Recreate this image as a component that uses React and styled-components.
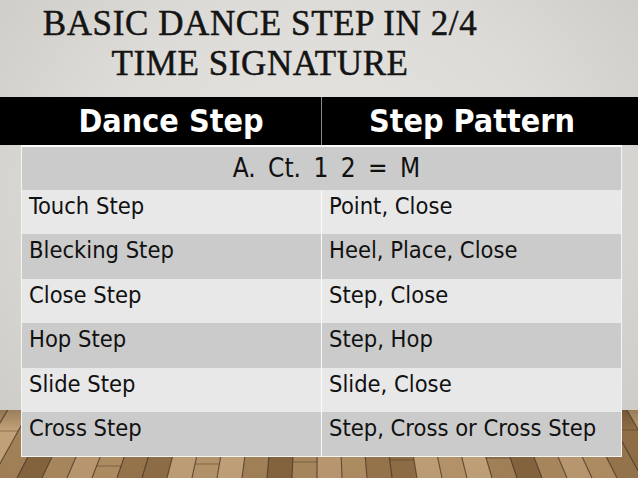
import React from 'react';
import styled, { createGlobalStyle } from 'styled-components';

const GlobalStyle = createGlobalStyle`
  html, body { margin: 0; padding: 0; }
  body { width: 638px; height: 478px; overflow: hidden; background: #d9d7d3; }
`;

const Page = styled.div`
  position: relative;
  width: 638px;
  height: 478px;
  overflow: hidden;
  background: radial-gradient(ellipse 75% 85% at 50% 40%, #e7e5e2 0%, #dddbd7 50%, #c9c6c2 100%);
`;

const FloorArt = styled.svg`
  position: absolute;
  left: 0;
  bottom: 0;
  z-index: 0;
  display: block;
`;

const Content = styled.div`
  position: relative;
  z-index: 1;
  padding-top: 4px;
`;

const Title = styled.h1`
  margin: 0 0 13px 0;
  width: 520px;
  text-align: center;
  font-family: "Liberation Serif", serif;
  font-weight: 400;
  font-size: 35px;
  line-height: 40px;
  letter-spacing: 0.6px;
  color: #141414;
  -webkit-text-stroke: 0.5px #141414;
`;

const HeaderBar = styled.div`
  display: grid;
  grid-template-columns: 300px 301px;
  padding-left: 21px;
  height: 48px;
  background: #000;
`;

const HeadCell = styled.div`
  display: flex;
  align-items: center;
  justify-content: center;
  color: #fff;
  font-family: "DejaVu Sans Condensed", "DejaVu Sans", sans-serif;
  font-stretch: condensed;
  font-weight: 700;
  font-size: 32px;
  border-left: ${p => (p.$divider ? '1px solid #8a8a8a' : 'none')};
`;

const Body = styled.div`
  box-sizing: border-box;
  margin-left: 21px;
  width: 601px;
  border: 1px solid #f3f3f3;
  border-top: 2px solid #fafafa;
`;

const SectionRow = styled.div`
  box-sizing: border-box;
  height: 43px;
  padding-top: 4px;
  background: #cbcbcb;
  display: flex;
  justify-content: center;
  font-family: "DejaVu Sans Condensed", "DejaVu Sans", sans-serif;
  font-stretch: condensed;
  font-size: 26px;
  line-height: 34px;
  word-spacing: 5px;
  color: #111;
  padding-left: 10px;
`;

const Row = styled.div`
  display: grid;
  grid-template-columns: 299px 1fr;
  height: ${p => p.$h}px;
  background: ${p => (p.$dark ? '#cbcbcb' : '#e8e8e8')};
`;

const Cell = styled.div`
  padding-left: ${p => (p.$divider ? 7 : 7)}px;
  border-left: ${p => (p.$divider ? '1px solid #fbfbfb' : 'none')};
  font-family: "DejaVu Sans Condensed", "DejaVu Sans", sans-serif;
  font-stretch: condensed;
  font-size: 23.5px;
  line-height: 32px;
  color: #111;
  white-space: nowrap;
`;

const rows = [
  ['Touch Step', 'Point, Close'],
  ['Blecking Step', 'Heel, Place, Close'],
  ['Close Step', 'Step, Close'],
  ['Hop Step', 'Step, Hop'],
  ['Slide Step', 'Slide, Close'],
  ['Cross Step', 'Step, Cross or Cross Step'],
];
const heights = [44, 45, 44, 45, 44, 44];

const plankColors = ['#a9875d', '#c2a077', '#94724a', '#caa97f', '#b08e63', '#9c7a50', '#bd9b70', '#8a6842', '#b69468', '#c7a67c'];

function Floor() {
  const H = 68;
  const W = 638;
  const vpx = 319;
  const vpy = -520;
  const f = (0 - vpy) / (H - vpy);
  const polys = [];
  const lines = [];
  for (let i = -14; i < 44; i++) {
    const xb = i * 25 - 8;
    const xb2 = xb + 25;
    const xt = vpx + (xb - vpx) * f;
    const xt2 = vpx + (xb2 - vpx) * f;
    const c = plankColors[((i * 7) % plankColors.length + plankColors.length) % plankColors.length];
    polys.push(
      <polygon key={'p' + i} points={`${xt},0 ${xt2},0 ${xb2},${H} ${xb},${H}`} fill={c} />
    );
    lines.push(
      <line key={'l' + i} x1={xt} y1={0} x2={xb} y2={H} stroke="#3e2a17" strokeWidth="1.1" opacity="0.7" />
    );
    const sy = ((i * 37) % 50 + 50) % 50 + 8;
    const t = (sy - vpy) / (H - vpy);
    lines.push(
      <line key={'s' + i} x1={vpx + (xb - vpx) * t} y1={sy} x2={vpx + (xb2 - vpx) * t} y2={sy} stroke="#4a321c" strokeWidth="1" opacity="0.45" />
    );
  }
  return (
    <FloorArt width={W} height={H} viewBox={`0 0 ${W} ${H}`}>
      <defs>
        <linearGradient id="shade" x1="0" y1="0" x2="0" y2="1">
          <stop offset="0" stopColor="#2a1a0a" stopOpacity="0.3" />
          <stop offset="0.3" stopColor="#2a1a0a" stopOpacity="0.05" />
          <stop offset="1" stopColor="#2a1a0a" stopOpacity="0.08" />
        </linearGradient>
      </defs>
      {polys}
      {lines}
      <rect x="0" y="0" width={W} height={H} fill="url(#shade)" />
    </FloorArt>
  );
}

export default function App() {
  return (
    <Page>
      <GlobalStyle />
      <Floor />
      <Content>
        <Title>
          BASIC DANCE STEP IN 2/4
          <br />
          TIME SIGNATURE
        </Title>
        <HeaderBar>
          <HeadCell>Dance Step</HeadCell>
          <HeadCell $divider>Step Pattern</HeadCell>
        </HeaderBar>
        <Body>
          <SectionRow>A. Ct. 1 2 = M</SectionRow>
          {rows.map(([a, b], i) => (
            <Row key={a} $dark={i % 2 === 1} $h={heights[i]}>
              <Cell>{a}</Cell>
              <Cell $divider>{b}</Cell>
            </Row>
          ))}
        </Body>
      </Content>
    </Page>
  );
}
